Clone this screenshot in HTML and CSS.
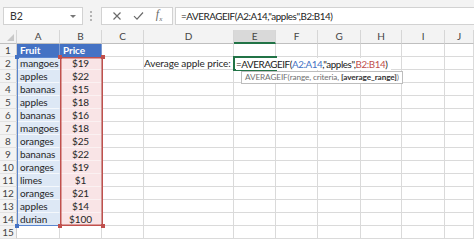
FILE: index.html
```html
<!DOCTYPE html>
<html>
<head>
<meta charset="utf-8">
<link rel="stylesheet" href="styles.css">
</head>
<body>
<div class="app">
  <div class="toolbar">
    <div class="namebox"><span class="ref">B2</span><span class="caret"></span></div>
    <div class="grip"><i></i><i></i><i></i></div>
    <div class="fxbox">
      <svg class="ico" width="10" height="10" viewBox="0 0 10 10"><path d="M1.5 1.5 L8.5 8.5 M8.5 1.5 L1.5 8.5" stroke="#6a6a6a" stroke-width="1.2" fill="none"/></svg>
      <svg class="ico" width="11" height="10" viewBox="0 0 11 10"><path d="M1 5.2 L4 8.2 L10 1.5" stroke="#6a6a6a" stroke-width="1.2" fill="none"/></svg>
      <span class="fx"><i>f</i><sub>x</sub></span>
    </div>
    <div class="formula">=AVERAGEIF(A2:A14,"apples",B2:B14)</div>
  </div>
  <div class="sheet">
    <div class="row head"><span class="corner"></span><span>A</span><span>B</span><span>C</span><span>D</span><span class="sel">E</span><span>F</span><span>G</span><span>H</span><span>I</span><span>J</span></div>
    <div class="row"><span>1</span><span class="th">Fruit</span><span class="th">Price</span><span></span><span></span><span></span><span></span><span></span><span></span><span></span><span></span></div>
    <div class="row"><span>2</span><span class="a">mangoes</span><span class="b">$19</span><span></span><span class="lbl">Average apple price:</span><span></span><span></span><span></span><span></span><span></span><span></span></div>
    <div class="row"><span>3</span><span class="a">apples</span><span class="b">$22</span><span></span><span></span><span></span><span></span><span></span><span></span><span></span><span></span></div>
    <div class="row"><span>4</span><span class="a">bananas</span><span class="b">$15</span><span></span><span></span><span></span><span></span><span></span><span></span><span></span><span></span></div>
    <div class="row"><span>5</span><span class="a">apples</span><span class="b">$18</span><span></span><span></span><span></span><span></span><span></span><span></span><span></span><span></span></div>
    <div class="row"><span>6</span><span class="a">bananas</span><span class="b">$16</span><span></span><span></span><span></span><span></span><span></span><span></span><span></span><span></span></div>
    <div class="row"><span>7</span><span class="a">mangoes</span><span class="b">$18</span><span></span><span></span><span></span><span></span><span></span><span></span><span></span><span></span></div>
    <div class="row"><span>8</span><span class="a">oranges</span><span class="b">$25</span><span></span><span></span><span></span><span></span><span></span><span></span><span></span><span></span></div>
    <div class="row"><span>9</span><span class="a">bananas</span><span class="b">$22</span><span></span><span></span><span></span><span></span><span></span><span></span><span></span><span></span></div>
    <div class="row"><span>10</span><span class="a">oranges</span><span class="b">$19</span><span></span><span></span><span></span><span></span><span></span><span></span><span></span><span></span></div>
    <div class="row"><span>11</span><span class="a">limes</span><span class="b">$1</span><span></span><span></span><span></span><span></span><span></span><span></span><span></span><span></span></div>
    <div class="row"><span>12</span><span class="a">oranges</span><span class="b">$21</span><span></span><span></span><span></span><span></span><span></span><span></span><span></span><span></span></div>
    <div class="row"><span>13</span><span class="a">apples</span><span class="b">$14</span><span></span><span></span><span></span><span></span><span></span><span></span><span></span><span></span></div>
    <div class="row"><span>14</span><span class="a">durian</span><span class="b">$100</span><span></span><span></span><span></span><span></span><span></span><span></span><span></span><span></span></div>
    <div class="row"><span>15</span><span></span><span></span><span></span><span></span><span></span><span></span><span></span><span></span><span></span><span></span></div>

    <div class="range range-a"><i class="h tl"></i><i class="h bl"></i></div>
    <div class="range range-b"><i class="h tl"></i><i class="h tr"></i><i class="h bl"></i><i class="h br"></i></div>
    <div class="editor"><span class="etext">=AVERAGEIF(<span class="ra">A2:A14</span>,"apples",<span class="rb">B2:B14</span>)</span></div>
    <div class="tip">AVERAGEIF(range, criteria, <b>[average_range]</b>)</div>
  </div>
</div>
</body>
</html>
```
FILE: styles.css
```css
* { box-sizing: border-box; }
html, body { margin: 0; padding: 0; }
body {
  width: 474px;
  height: 239px;
  overflow: hidden;
  background: #fff;
  font-family: Lato, "Open Sans", sans-serif;
  color: #262626;
}
.app { width: 474px; height: 239px; overflow: hidden; }

/* toolbar */
.toolbar {
  height: 30px;
  background: #f3f3f3;
  display: flex;
  align-items: flex-start;
  padding: 7px 0 0 3px;
}
.namebox {
  width: 80px;
  height: 18px;
  background: #fff;
  border: 1px solid #d2d2d2;
  display: flex;
  align-items: center;
  justify-content: space-between;
  padding: 0 6px 0 6px;
  font-size: 10.5px;
  color: #333;
}
.caret {
  width: 0; height: 0;
  border-left: 3px solid transparent;
  border-right: 3px solid transparent;
  border-top: 3px solid #777;
}
.grip {
  margin-left: 6px;
  width: 3px;
  height: 18px;
  display: flex;
  flex-direction: column;
  justify-content: center;
  gap: 2px;
  align-items: center;
}
.grip i { display: block; width: 2px; height: 2px; background: #b4b4b4; }
.fxbox {
  margin-left: 9px;
  width: 72px;
  height: 18px;
  background: #fff;
  border: 1px solid #d2d2d2;
  display: flex;
  align-items: center;
  justify-content: space-around;
  padding: 0 4px;
}
.fx { font-family: "Liberation Serif", serif; font-size: 12px; color: #6a6a6a; line-height: 1; }
.fx sub { font-size: 7px; font-style: italic; }
.formula {
  margin-left: 2px;
  flex: 1;
  height: 18px;
  background: #fff;
  border: 1px solid #d2d2d2;
  border-right: none;
  font-size: 9.8px;
  letter-spacing: -0.4px;
  line-height: 16px;
  padding-left: 5px;
  color: #222;
  white-space: nowrap;
}

/* sheet */
.sheet { position: relative; }
.row { display: flex; height: 13px; }
.row > span {
  flex: none;
  height: 100%;
  border-right: 1px solid #dadada;
  border-bottom: 1px solid #dadada;
  font-size: 10px;
  letter-spacing: -0.1px;
  line-height: 12px;
  white-space: nowrap;
  overflow: hidden;
}
.row > span:nth-child(1) { width: 17px; }
.row > span:nth-child(2) { width: 43px; }
.row > span:nth-child(3) { width: 42px; }
.row > span:nth-child(4) { width: 42px; }
.row > span:nth-child(5) { width: 90px; }
.row > span:nth-child(6) { width: 42px; }
.row > span:nth-child(7) { width: 42px; }
.row > span:nth-child(8) { width: 43px; }
.row > span:nth-child(9) { width: 41px; }
.row > span:nth-child(10) { width: 43px; }
.row > span:nth-child(11) { width: 29px; }

.row > span:first-child {
  background: #f3f3f3;
  color: #444;
  font-size: 10px;
  letter-spacing: 0;
  text-align: center;
  border-right-color: #cfcfcf;
  border-bottom-color: #e2e2e2;
}
.row.head { height: 14px; }
.row.head > span {
  background: #f3f3f3;
  color: #444;
  font-size: 10px;
  line-height: 13px;
  text-align: center;
  border-right-color: #d6d6d6;
  border-bottom-color: #bfbfbf;
}
.row.head > span.sel {
  background: #d9d9d9;
  border-bottom: 2px solid #217346;
  color: #444;
}
.corner { position: relative; }
.corner::after {
  content: "";
  position: absolute;
  right: 2px; bottom: 2px;
  width: 0; height: 0;
  border-left: 7px solid transparent;
  border-bottom: 7px solid #c8c8c8;
}

.th {
  background: #4472c4;
  color: #fff;
  font-weight: bold;
  padding-left: 3px;
  border-right-color: #7d9bd3 !important;
  border-bottom-color: #4472c4 !important;
}
.a {
  background: #dde8f5;
  padding-left: 3px;
  border-bottom-color: #f4f8fc !important;
  border-right-color: #dde8f5 !important;
}
.b {
  background: #f9e4e6;
  text-align: center;
  border-bottom-color: #fbf1f2 !important;
}
.lbl { text-align: right; padding-right: 3px; }

/* overlays */
.range { position: absolute; top: 27px; height: 169px; }
.range-a { left: 17px; width: 44px; border: 1px solid #5b86cf; }
.range-b { left: 60px; width: 43px; border: 1px solid #c0504d; box-shadow: inset 0 0 0 0.5px #c0504d; }
.h { position: absolute; width: 4px; height: 4px; }
.range-a .h { background: #4472c4; }
.range-b .h { background: #c0504d; }
.h.tl { left: -3px; top: -3px; }
.h.tr { right: -3px; top: -3px; }
.h.bl { left: -3px; bottom: -3px; }
.h.br { right: -3px; bottom: -3px; }

.editor {
  position: absolute;
  left: 233px;
  top: 26px;
  width: 44px;
  height: 15px;
  border: 2px solid #217346;
}
.etext {
  position: absolute;
  left: 1px;
  top: 0;
  font-size: 9.8px;
  letter-spacing: -0.4px;
  line-height: 12px;
  background: #fff;
  padding-right: 3px;
  white-space: nowrap;
  color: #1a1a1a;
}
.ra { color: #4472c4; }
.rb { color: #c0504d; }
.tip {
  position: absolute;
  left: 241px;
  top: 41px;
  height: 13px;
  background: #fff;
  border: 1px solid #bdbdbd;
  font-size: 8.2px;
  letter-spacing: -0.1px;
  line-height: 11px;
  color: #6f6f6f;
  padding: 0 3px;
  white-space: nowrap;
}
.tip b { color: #333; font-weight: bold; }
```
